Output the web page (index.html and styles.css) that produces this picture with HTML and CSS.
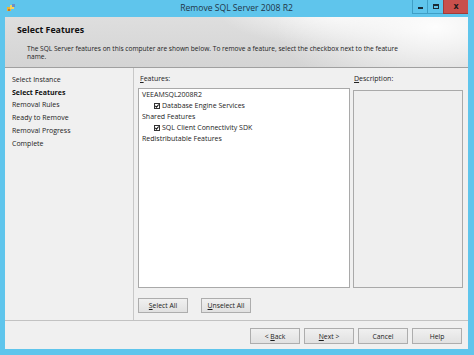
FILE: index.html
```html
<!DOCTYPE html>
<html>
<head>
<meta charset="utf-8">
<link rel="stylesheet" href="styles.css">
</head>
<body>
<div class="window">
  <div class="titlebar">
    <svg class="appicon" width="9" height="8" viewBox="0 0 9 8">
      <rect x="0" y="3" width="4" height="4" fill="#e8b53a"/>
      <rect x="3" y="1" width="4" height="4" fill="#f4d35e"/>
      <rect x="5" y="0" width="3" height="3" fill="#6b8fc7"/>
      <rect x="1" y="5" width="2" height="2" fill="#c77a2a"/>
    </svg>
    <div class="title">Remove SQL Server 2008 R2</div>
    <div class="controls">
      <div class="ctl min"><span class="minbar"></span></div>
      <div class="ctl max"><span class="maxbox"></span></div>
      <div class="ctl close">x</div>
    </div>
  </div>
  <div class="client">
    <div class="header">
      <div class="h-title">Select Features</div>
      <div class="h-desc">The SQL Server features on this computer are shown below. To remove a feature, select the checkbox next to the feature name.</div>
    </div>
    <div class="body">
      <div class="nav">
        <div class="nav-item">Select Instance</div>
        <div class="nav-item active">Select Features</div>
        <div class="nav-item">Removal Rules</div>
        <div class="nav-item">Ready to Remove</div>
        <div class="nav-item">Removal Progress</div>
        <div class="nav-item">Complete</div>
      </div>
      <div class="main">
        <div class="cols">
          <div class="col features">
            <div class="label"><u>F</u>eatures:</div>
            <div class="listbox">
              <div class="row">VEEAMSQL2008R2</div>
              <div class="row indent"><svg class="cb" width="6" height="6" viewBox="0 0 6 6"><rect x="0.5" y="0.5" width="5" height="5" fill="#fff" stroke="#333"/><path d="M1.3 2.9 L2.5 4.2 L4.7 1.5" fill="none" stroke="#111" stroke-width="1.1"/></svg><span>Database Engine Services</span></div>
              <div class="row">Shared Features</div>
              <div class="row indent"><svg class="cb" width="6" height="6" viewBox="0 0 6 6"><rect x="0.5" y="0.5" width="5" height="5" fill="#fff" stroke="#333"/><path d="M1.3 2.9 L2.5 4.2 L4.7 1.5" fill="none" stroke="#111" stroke-width="1.1"/></svg><span>SQL Client Connectivity SDK</span></div>
              <div class="row">Redistributable Features</div>
            </div>
          </div>
          <div class="col desc">
            <div class="label"><u>D</u>escription:</div>
            <div class="descbox"></div>
          </div>
        </div>
        <div class="selbtns">
          <div class="btn"><span><u>S</u>elect All</span></div>
          <div class="btn"><span><u>U</u>nselect All</span></div>
        </div>
      </div>
    </div>
    <div class="footer">
      <div class="btn wide"><span>&lt; <u>B</u>ack</span></div>
      <div class="btn wide"><span><u>N</u>ext &gt;</span></div>
      <div class="btn wide"><span>Cancel</span></div>
      <div class="btn wide"><span>Help</span></div>
    </div>
  </div>
</div>
</body>
</html>
```
FILE: styles.css
```css
* { box-sizing: border-box; }
html, body { margin: 0; padding: 0; }
body {
  width: 474px;
  height: 355px;
  overflow: hidden;
  font-family: "Open Sans", "Noto Sans", sans-serif;
  color: #1b1b1b;
}
.window {
  width: 474px;
  height: 355px;
  background: #5fc5ec;
  padding: 0 6px 6px 5px;
  display: flex;
  flex-direction: column;
}
.titlebar {
  height: 17px;
  display: flex;
  align-items: center;
  position: relative;
}
.appicon { margin-left: 2px; margin-top: -2px; }
.title {
  position: absolute;
  left: 0; right: 0;
  top: 2px;
  text-align: center;
  font-size: 8.6px;
  color: #1f3547;
}
.controls {
  position: absolute;
  right: 0;
  top: 0;
  display: flex;
}
.ctl {
  height: 14px;
  display: flex;
  align-items: center;
  justify-content: center;
  border-left: 1px solid #3f9fc6;
  border-bottom: 1px solid #3f9fc6;
}
.ctl.min { width: 15px; }
.ctl.max { width: 16px; }
.ctl.close {
  width: 25px;
  background: #c9504c;
  border-color: #a23b38;
  color: #1b1b1b;
  font-size: 8px;
  font-weight: bold;
  font-family: "DejaVu Sans", sans-serif;
}
.minbar { width: 5px; height: 2px; background: #1b2b36; margin-top: 3px; }
.maxbox { width: 6px; height: 5px; border: 1px solid #1b2b36; border-top-width: 2px; }
.client {
  flex: 1;
  background: #f0f0f0;
  display: flex;
  flex-direction: column;
}
.header {
  height: 51px;
  border-bottom: 1px solid #a0a0a0;
  background:
    radial-gradient(ellipse 160px 70px at 430px 10px, rgba(255,255,255,0.95), rgba(255,255,255,0) 100%),
    radial-gradient(ellipse 120px 40px at 330px -10px, rgba(255,255,255,0.9), rgba(255,255,255,0) 100%),
    linear-gradient(to bottom, #dedede, #d4d4d4);
  padding: 7px 0 0 12px;
}
.h-title {
  font-weight: bold;
  font-size: 8.8px;
  color: #111;
  line-height: 12px;
}
.h-desc {
  font-size: 6.6px;
  line-height: 8px;
  margin-top: 9px;
  padding-left: 10px;
  width: 395px;
  color: #222;
}
.body {
  flex: 1;
  display: flex;
}
.nav {
  width: 129px;
  border-right: 1px solid #c8c8c8;
  padding: 6px 0 0 7px;
  display: flex;
  flex-direction: column;
}
.nav-item {
  font-size: 7px;
  line-height: 12.7px;
  color: #222;
}
.nav-item.active { font-weight: bold; color: #111; }
.main {
  flex: 1;
  padding: 6px 5px 0 4px;
  display: flex;
  flex-direction: column;
}
.cols {
  display: flex;
  gap: 3px;
}
.col { display: flex; flex-direction: column; }
.col.features { width: 212px; }
.col.desc { width: 110px; }
.label {
  font-size: 7px;
  line-height: 10px;
  height: 14px;
  padding-left: 2px;
  color: #222;
}
.col.desc .label { height: 16px; padding-left: 1px; }
.listbox {
  height: 200px;
  background: #fff;
  border: 1px solid #a9a9a9;
  padding: 0 0 0 3px;
}
.row {
  font-size: 7px;
  line-height: 11px;
  height: 11px;
  display: flex;
  align-items: center;
  color: #1b1b1b;
}
.row.indent { padding-left: 12px; }
.cb { margin-right: 2px; flex: none; }
.descbox {
  height: 198px;
  border: 1px solid #a9a9a9;
  background: #efefef;
}
.selbtns {
  display: flex;
  gap: 13px;
  margin-top: 10px;
}
.btn {
  width: 50px;
  height: 15px;
  border: 1px solid #adadad;
  background: linear-gradient(to bottom, #f0f0f0, #e1e1e1);
  font-size: 6.8px;
  display: flex;
  align-items: center;
  justify-content: center;
  color: #1b1b1b;
}
.footer {
  height: 29px;
  border-top: 1px solid #c2c2c2;
  display: flex;
  justify-content: flex-end;
  gap: 4px;
  padding: 7px 6px 0 0;
}
.btn.wide { width: 50px; height: 16px; }
```
